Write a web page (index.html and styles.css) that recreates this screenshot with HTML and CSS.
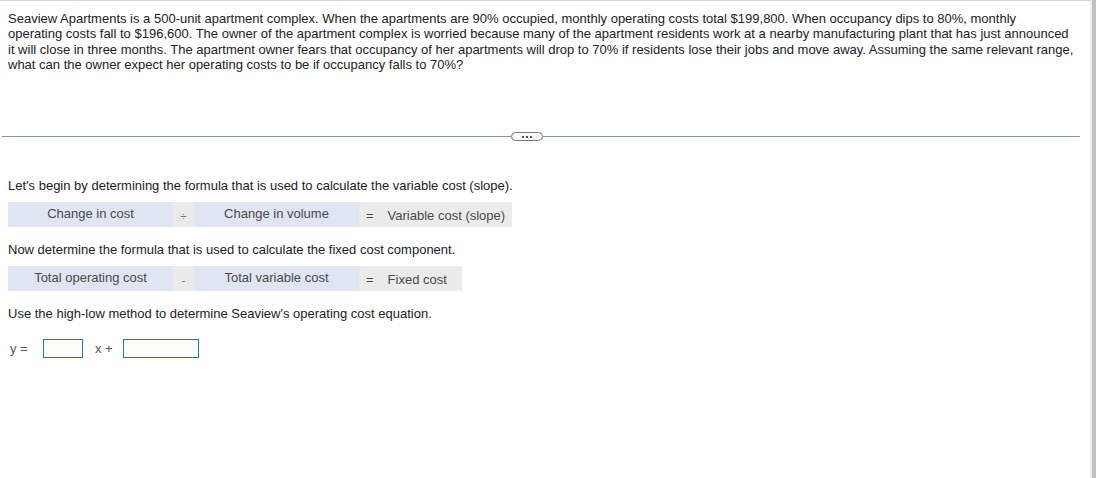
FILE: index.html
```html
<!DOCTYPE html>
<html>
<head>
<meta charset="utf-8">
<link rel="stylesheet" href="styles.css">
</head>
<body>
<div class="page">
  <div class="main">
    <p class="question">Seaview Apartments is a 500-unit apartment complex. When the apartments are 90% occupied, monthly operating costs total $199,800. When occupancy dips to 80%, monthly<br>operating costs fall to $196,600. The owner of the apartment complex is worried because many of the apartment residents work at a nearby manufacturing plant that has just announced<br>it will close in three months. The apartment owner fears that occupancy of her apartments will drop to 70% if residents lose their jobs and move away. Assuming the same relevant range,<br>what can the owner expect her operating costs to be if occupancy falls to 70%?</p>
    <div class="divider">
      <span class="rule rule-left"></span>
      <span class="pill"><i></i><i></i><i></i></span>
      <span class="rule"></span>
    </div>
    <div class="work">
      <p class="step step-first">Let's begin by determining the formula that is used to calculate the variable cost (slope).</p>
      <div class="formula">
        <span class="cell term">Change in cost</span>
        <span class="cell op">÷</span>
        <span class="cell term">Change in volume</span>
        <span class="cell result"><span class="eq">=</span>Variable cost (slope)</span>
      </div>
      <p class="step">Now determine the formula that is used to calculate the fixed cost component.</p>
      <div class="formula">
        <span class="cell term">Total operating cost</span>
        <span class="cell op">-</span>
        <span class="cell term">Total variable cost</span>
        <span class="cell result result-fixed"><span class="eq">=</span>Fixed cost</span>
      </div>
      <p class="step">Use the high-low method to determine Seaview's operating cost equation.</p>
      <div class="equation">
        <span class="lbl">y =</span>
        <span class="box box-small"></span>
        <span class="lbl lbl-x">x +</span>
        <span class="box box-wide"></span>
      </div>
    </div>
  </div>
  <div class="edge"></div>
  <div class="scrollbar"></div>
</div>
</body>
</html>
```

FILE: styles.css
```css
html, body {
  margin: 0;
  padding: 0;
  background: #ffffff;
}
body {
  font-family: "Liberation Sans", Arial, sans-serif;
  font-size: 13px;
  line-height: 15px;
  color: #222222;
}
.page {
  display: flex;
  height: 478px;
  overflow: hidden;
}
.main {
  flex: 1;
  border-top: 1px solid #d3d8e0;
  display: flex;
  flex-direction: column;
}
.edge {
  width: 2px;
  background: #ececec;
}
.scrollbar {
  width: 4px;
  background: #c1c1c1;
}
.question {
  margin: 0;
  padding: 10px 4px 0 8px;
  line-height: 15.3px;
}
.divider {
  margin: 60px 10px 0 2px;
  height: 9px;
  display: flex;
  align-items: center;
}
.rule {
  flex: 1;
  height: 1px;
  background: #8a93a3;
}
.rule-left {
  flex: 0 0 509px;
}
.pill {
  width: 30px;
  height: 7px;
  border: 1px solid #6f7b8c;
  border-radius: 5px;
  background: #f7f8fa;
  display: flex;
  align-items: center;
  justify-content: center;
  gap: 2px;
}
.pill i {
  width: 2px;
  height: 2px;
  background: #4b5563;
}
.work {
  display: flex;
  flex-direction: column;
  align-items: flex-start;
  padding-left: 8px;
}
.step {
  margin: 15px 0 0 0;
}
.step-first {
  margin-top: 37px;
}
.formula {
  display: flex;
  margin-top: 9px;
  height: 25px;
  color: #4a4a4a;
}
.cell {
  display: flex;
  align-items: center;
  justify-content: center;
}
.term {
  width: 165px;
  background: #dfe6f1;
  padding-bottom: 2px;
  box-sizing: border-box;
}
.op {
  width: 21px;
  background: #ebebeb;
  font-size: 11px;
  color: #777777;
  padding-top: 3px;
  box-sizing: border-box;
}
.result {
  background: #ebebeb;
  padding: 2px 7px 0 7px;
}
.result-fixed {
  padding-right: 15px;
}
.eq {
  margin-right: 14px;
}
.equation {
  display: flex;
  align-items: center;
  margin-top: 18px;
  color: #555555;
}
.lbl {
  margin-left: 2px;
  width: 33px;
}
.lbl-x {
  margin-left: 12px;
  width: 28px;
}
.box {
  height: 19px;
  border: 1px solid #1a7d9b;
  box-sizing: border-box;
  background: #ffffff;
}
.box-small {
  width: 40px;
}
.box-wide {
  width: 76px;
}
```
